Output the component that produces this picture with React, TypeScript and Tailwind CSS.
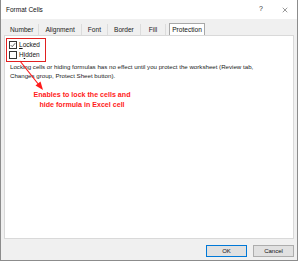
import { X } from "lucide-react";

const tabs = [
  { t: "Number", px: "px-[5px]" },
  { t: "Alignment", px: "px-[6px]" },
  { t: "Font", px: "px-[6px]" },
  { t: "Border", px: "px-[6px]" },
  { t: "Fill", px: "px-[8px]" },
];

function Check({ checked }: { checked?: boolean }) {
  return (
    <div className="w-[8px] h-[8px] border border-[#333] bg-white flex items-center justify-center">
      {checked && (
        <svg viewBox="0 0 8 8" className="w-[6px] h-[6px]">
          <path d="M1 4.2 L3 6.2 L7 1.5" fill="none" stroke="#333" strokeWidth="1" />
        </svg>
      )}
    </div>
  );
}

export default function App() {
  return (
    <div className="w-[300px] h-[263px] bg-white overflow-hidden font-['Liberation_Sans',Arial,sans-serif] text-[#111]">
      <div className="w-[298px] h-[261px] border-l border-r border-b border-[#8c8c8c] flex flex-col relative">
        {/* title bar */}
        <div className="h-[19px] bg-white flex items-center pl-[5px] pr-[8px] shrink-0">
          <span className="text-[6.5px]">Format Cells</span>
          <span className="ml-auto text-[7px] text-[#333] mr-[18px]">?</span>
          <X className="w-[8px] h-[8px] text-[#333]" strokeWidth={1.5} />
        </div>

        <div className="flex-1 bg-[#f0f0f0] flex flex-col px-[3px] pt-[4px]">
          {/* tabs */}
          <div className="flex items-end h-[12px] pl-[1px] text-[6.6px]">
            {tabs.map(({ t, px }) => (
              <div
                key={t}
                className={`h-[11px] ${px} flex items-center border-r border-[#dcdcdc] text-[#222]`}
              >
                {t}
              </div>
            ))}
            <div className="h-[12px] px-[2px] ml-[3px] flex items-center bg-white border border-[#a8a8a8] border-b-0 text-[#111]">
              Protection
            </div>
          </div>

          {/* panel */}
          <div className="h-[204px] bg-white border border-[#d9d9d9] flex flex-col pl-[1px] pt-[2px] relative">
            <div className="w-[40px] border border-[#e02020] flex flex-col gap-[2px] pl-[2px] pt-[2px] pb-[2px] text-[6.5px]">
              <div className="flex items-center gap-[2px] h-[8px]">
                <Check checked />
                <span>
                  <span className="underline">L</span>ocked
                </span>
              </div>
              <div className="flex items-center gap-[2px] h-[8px]">
                <Check />
                <span>
                  H<span className="underline">i</span>dden
                </span>
              </div>
            </div>

            <p className="ml-[4px] text-[6.15px] leading-[9px] text-[#222]">
              Locking cells or hiding formulas has no effect until you protect the worksheet (Review tab,
              <br />
              Changes group, Protect Sheet button).
            </p>

            <div className="ml-[17px] mt-[10px] w-[118px] text-center text-[7.1px] leading-[10px] font-bold text-[#ff1a1a]">
              Enables to lock the cells and
              <br />
              hide formula in Excel cell
            </div>

            <svg className="absolute left-0 top-0 w-[60px] h-[60px] pointer-events-none" viewBox="0 0 60 60">
              <line x1="15" y1="25" x2="34" y2="49" stroke="#ff1a1a" strokeWidth="1.2" />
              <polygon points="38,54 30.5,49.5 35.5,45.5" fill="#ff1a1a" />
            </svg>
          </div>

          {/* buttons */}
          <div className="flex justify-end gap-[6px] mt-[6px]">
            <button className="w-[41px] h-[12px] bg-[#e1e1e1] border border-[#0078d7] text-[6px] text-[#111] flex items-center justify-center">
              OK
            </button>
            <button className="w-[41px] h-[12px] bg-[#e1e1e1] border border-[#adadad] text-[6px] text-[#111] flex items-center justify-center">
              Cancel
            </button>
          </div>
        </div>
      </div>
    </div>
  );
}
